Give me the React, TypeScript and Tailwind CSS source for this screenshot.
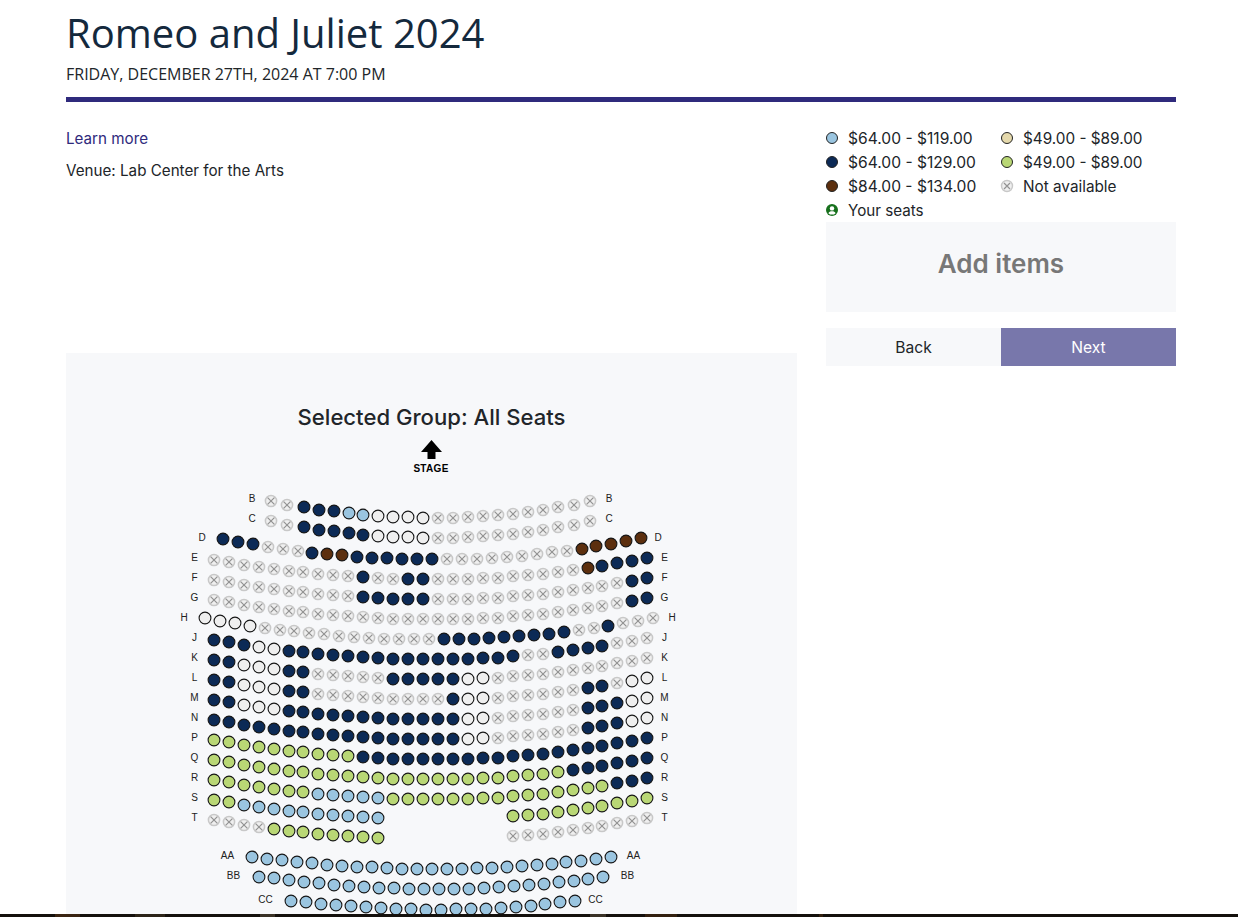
import React from 'react';

type Seat = { x: number; y: number; kind: string };

const fills: Record<string, string> = {
  n: '#0c2a56',
  w: '#efefef',
  b: '#5c2f0e',
  g: '#b9d775',
  l: '#9ac5e0',
  e: '#e5d9ac',
};

// main block columns, rows E to T
const X30 = [214, 229, 244, 259, 274, 289, 303, 318, 333, 348, 363, 378, 393, 408, 423, 438, 453, 468, 483, 498, 513, 528, 543, 558, 573, 588, 602, 617, 632, 647];
const Y30 = [0, 2, 5, 7, 9, 11, 12, 14, 15, 16, 17, 18, 19, 19, 19, 19, 19, 19, 18, 18, 16, 15, 14, 12, 10, 8, 6, 3, 1, -2];

const X22 = [271, 287, 304, 319, 334, 349, 363, 378, 393, 408, 423, 438, 453, 468, 483, 498, 513, 528, 543, 558, 574, 590];
const Y22 = [0, 4, 6, 9, 10, 12, 14, 15, 16, 16, 17, 17, 17, 16, 15, 14, 13, 11, 9, 6, 4, 0];

const XD = [223, 238, 253, 268, 283, 298, 312, 327, 342, 357, 372, 387, 402, 417, 432, 447, 462, 477, 492, 507, 522, 537, 552, 567, 582, 596, 611, 626, 641];
const YD = [539, 542, 544, 547, 549, 551, 553, 554, 555, 557, 558, 558, 559, 559, 559, 559, 559, 559, 558, 557, 556, 554, 552, 551, 549, 546, 544, 541, 538];

const XH = [205, 220, 235, 250, 265, 280, 294, 309, 324, 339, 354, 369, 384, 399, 414, 429, 444, 459, 474, 489, 504, 519, 534, 549, 564, 579, 594, 608, 623, 638, 653];
const YH = [618, 621, 623, 626, 628, 630, 631, 633, 634, 636, 637, 638, 639, 639, 639, 639, 639, 639, 639, 638, 637, 636, 635, 634, 632, 630, 628, 626, 623, 621, 618];

const XAA = [252, 267, 282, 297, 312, 327, 342, 357, 372, 387, 402, 417, 432, 447, 462, 477, 492, 507, 522, 537, 552, 566, 581, 596, 611];
const YAA = [857, 859, 860, 862, 863, 865, 866, 867, 867, 868, 869, 869, 869, 869, 869, 868, 868, 867, 866, 865, 864, 862, 861, 859, 857];

const XBB = [259, 274, 289, 304, 319, 334, 349, 364, 379, 394, 409, 424, 439, 454, 469, 484, 499, 514, 529, 544, 559, 574, 588, 603];
const YBB = [877, 878, 880, 882, 883, 885, 886, 887, 888, 888, 889, 889, 889, 889, 889, 888, 887, 886, 885, 884, 882, 881, 879, 877];

const XCC = [291, 306, 321, 336, 351, 366, 381, 396, 411, 426, 441, 456, 471, 486, 501, 516, 531, 545, 560, 575];
const YCC = [901, 902, 904, 905, 906, 907, 908, 909, 909, 910, 910, 909, 909, 909, 908, 907, 906, 904, 902, 901];

const zip = (xs: number[], ys: number[], kinds: string): Seat[] =>
  xs.map((x, i) => ({ x, y: ys[i], kind: kinds[i] }));

const main = (base: number, kinds: string) => zip(X30, Y30.map((d) => base + d), kinds);
const top = (base: number, kinds: string) => zip(X22, Y22.map((d) => base + d), kinds);

const seats: Seat[] = [
  ...top(501, 'xxnnnllwwwwxxxxxxxxxxx'),
  ...top(521, 'xxnnnnnwwwwxxxxxxxxxxx'),
  ...zip(XD, YD, 'nnnxxxnbbnnnnnnxxxxxxxxxbbbbb'),
  ...main(560, 'xxxxxxxxxxnxxnnxxxxxxxxxxbnnnn'),
  ...main(580, 'xxxxxxxxxxnnnnnxxxxxxxxxxxxxnn'),
  ...main(600, 'xxxxxxxxxxxxxxxxxxxxxxxxxxxxnn'),
  ...zip(XH, YH, 'wwwwxxxxxxxxxxxxnnnnnnnnnxxnxxx'),
  ...main(640, 'nnnwwnnnnnnnnnnnnnnnnxxnnnnxxx'),
  ...main(660, 'nnwwwnnxxxxxnnnnnwwxxxxxxxxxxx'),
  ...main(680, 'nnwwwnnxxxxxxxxxnwwxxxxxxnnxww'),
  ...main(700, 'nnwwwnnnnnnnnnnnnwwxxxxxxnnnww'),
  ...main(720, 'nnnnnnnnnnnnnnnnnwwxxxxxxnnnww'),
  ...main(740, 'ggggggggggnnnnnnnnnnnnnnnnnnnn'),
  ...main(760, 'ggggggggggggggggggggggggnnnnnn'),
  ...main(780, 'ggggggglllllgggggggggggggggnnn'),
  ...main(800, 'ggllllllllll........gggggggggg'),
  ...main(820, 'xxxxgggggggg........xxxxxxxxxx'),
  ...zip(XAA, YAA, 'l'.repeat(25)),
  ...zip(XBB, YBB, 'l'.repeat(24)),
  ...zip(XCC, YCC, 'l'.repeat(20)),
];

const labels: [string, number, number][] = [
  ['B', 252, 498], ['B', 609, 498], ['C', 252, 518], ['C', 609, 518],
  ['D', 202, 537], ['D', 658, 537], ['E', 194.5, 557], ['E', 664.5, 557],
  ['F', 194.5, 577], ['F', 664.5, 577], ['G', 194.5, 597], ['G', 664.5, 597],
  ['H', 184, 617], ['H', 672, 617], ['J', 194.5, 637], ['J', 664.5, 637],
  ['K', 194.5, 657], ['K', 664.5, 657], ['L', 194.5, 677], ['L', 664.5, 677],
  ['M', 194.5, 697], ['M', 664.5, 697], ['N', 194.5, 717], ['N', 664.5, 717],
  ['P', 194.5, 737], ['P', 664.5, 737], ['Q', 194.5, 757], ['Q', 664.5, 757],
  ['R', 194.5, 777], ['R', 664.5, 777], ['S', 194.5, 797], ['S', 664.5, 797],
  ['T', 194.5, 817], ['T', 664.5, 817], ['AA', 227.5, 855], ['AA', 633.5, 855],
  ['BB', 233.5, 875], ['BB', 627.5, 875], ['CC', 265.5, 899], ['CC', 595.5, 899],
];

const SeatDot = ({ x, y, kind }: Seat) => {
  if (kind === 'x') {
    return (
      <g>
        <circle cx={x} cy={y} r={5.6} fill="#efefef" stroke="#c8c8c8" strokeWidth={1.5} />
        <path
          d={`M${x - 3.4} ${y - 3.4}L${x + 3.4} ${y + 3.4}M${x + 3.4} ${y - 3.4}L${x - 3.4} ${y + 3.4}`}
          stroke="#929292"
          strokeWidth={1.2}
        />
      </g>
    );
  }
  return <circle cx={x} cy={y} r={5.9} fill={fills[kind]} stroke="#161616" strokeWidth={1.1} />;
};

const LegendIcon = ({ kind }: { kind: string }) => (
  <svg width={14} height={14} viewBox="0 0 14 14" className="shrink-0">
    {kind === 'x' ? (
      <>
        <circle cx={7} cy={7} r={5.5} fill="#efefef" stroke="#c8c8c8" strokeWidth={1.4} />
        <path d="M4 4L10 10M10 4L4 10" stroke="#929292" strokeWidth={1.2} />
      </>
    ) : kind === 'you' ? (
      <>
        <circle cx={7} cy={7} r={6} fill="#17701c" />
        <circle cx={7} cy={5.4} r={2.2} fill="#ffffff" />
        <path d="M3.4 10.2C4 8.7 5.3 8.3 7 8.3s3 .4 3.6 1.9L9 11.4H5z" fill="#ffffff" />
      </>
    ) : (
      <circle cx={7} cy={7} r={5.5} fill={fills[kind]} stroke="#222222" strokeWidth={1} />
    )}
  </svg>
);

const legend: [string, string, string][] = [
  ['l', '$64.00 - $119.00', 'text-[15.6px]'],
  ['e', '$49.00 - $89.00', 'text-[15.3px]'],
  ['n', '$64.00 - $129.00', 'text-[15.6px]'],
  ['g', '$49.00 - $89.00', 'text-[15.3px]'],
  ['b', '$84.00 - $134.00', 'text-[15.6px]'],
  ['x', 'Not available', 'text-[15.3px]'],
  ['you', 'Your seats', 'text-[15.2px]'],
];

// photo edge showing under the page
const strip: [string, string][] = [
  ['w-[55px]', 'bg-[#14100c]'],
  ['w-[25px]', 'bg-[#3a2412]'],
  ['w-[55px]', 'bg-[#14100c]'],
  ['w-[30px]', 'bg-[#2c2418]'],
  ['w-[95px]', 'bg-[#14100c]'],
  ['w-[15px]', 'bg-[#3a3226]'],
  ['w-[315px]', 'bg-[#14100c]'],
  ['w-[16px]', 'bg-[#3a3226]'],
  ['w-[39px]', 'bg-[#14100c]'],
  ['w-[32px]', 'bg-[#33200f]'],
  ['w-[142px]', 'bg-[#14100c]'],
  ['w-[4px]', 'bg-[#33200f]'],
  ['flex-1', 'bg-[#14100c]'],
];

export default function App() {
  return (
    <div className="h-[917px] overflow-hidden flex flex-col bg-white font-['Inter',sans-serif] text-[#212529]">
      <div className="flex-1 min-h-0 overflow-hidden pl-[66px] pr-[62px]">
        <h1 className="font-['Open_Sans',sans-serif] text-[40px] leading-[48px] text-[#14293d] mt-[9px]">
          Romeo and Juliet 2024
        </h1>
        <p className="font-['Open_Sans',sans-serif] text-[16px] leading-6 mt-[5px] text-[#212529]">
          FRIDAY, DECEMBER 27TH, 2024 AT 7:00 PM
        </p>
        <div className="h-[5px] bg-[#2f2a7c] mt-[11px]" />

        <div className="flex mt-6 gap-[29px]">
          <div className="w-[731px] shrink-0">
            <a className="block text-[15.2px] leading-6 pt-px -mb-px text-[#2f2a7c]">Learn more</a>
            <p className="text-[15.2px] leading-6 mt-2 pt-px -mb-px">Venue: Lab Center for the Arts</p>

            <div className="mt-[171px] bg-[#f7f8fa] h-[600px]">
              <h2 className="pt-[50px] text-center text-[22.1px] leading-[28px] font-medium text-[#212529]">
                Selected Group: All Seats
              </h2>
              <div className="flex flex-col items-center mt-[9px] -ml-px">
                <svg width={21} height={19} viewBox="0 0 21 19">
                  <path d="M10.5 0L21 12H14.5V19H6.5V12H0Z" fill="#000000" />
                </svg>
                <span className="font-['Liberation_Sans',sans-serif] text-[10px] leading-3 font-bold tracking-[0.3px] text-black mt-1">
                  STAGE
                </span>
              </div>
              <svg width={731} height={440} viewBox="66 480 731 440" className="block mt-[5px]">
                {seats
                  .filter((s) => s.kind !== '.')
                  .map((s, i) => (
                    <SeatDot key={i} {...s} />
                  ))}
                {labels.map(([t, x, y], i) => (
                  <text
                    key={i}
                    x={x}
                    y={y}
                    textAnchor="middle"
                    dominantBaseline="central"
                    fontSize={10}
                    fill="#222222"
                    fontFamily="'Liberation Sans', sans-serif"
                  >
                    {t}
                  </text>
                ))}
              </svg>
            </div>
          </div>

          <div className="w-[350px] shrink-0">
            <div className="grid grid-cols-2">
              {legend.map(([kind, text, size], i) => (
                <div key={i} className="flex items-center h-6 gap-[9px] -ml-px">
                  <LegendIcon kind={kind} />
                  <span className={`${size} leading-6 pt-px`}>{text}</span>
                </div>
              ))}
            </div>
            <div className="h-[90px] bg-[#f7f8fa] flex justify-center pt-6">
              <span className="text-[26px] leading-9 font-semibold text-[#777777]">Add items</span>
            </div>
            <div className="flex mt-4 h-[38px]">
              <button className="flex-1 bg-[#f7f8fa] text-[15.6px] pt-px text-[#212529]">Back</button>
              <button className="flex-1 bg-[#7877ab] text-[15.6px] pt-px text-white">Next</button>
            </div>
          </div>
        </div>
      </div>
      <div className="h-[3px] flex">
        {strip.map(([w, bg], i) => (
          <div key={i} className={`${w} ${bg}`} />
        ))}
      </div>
    </div>
  );
}
